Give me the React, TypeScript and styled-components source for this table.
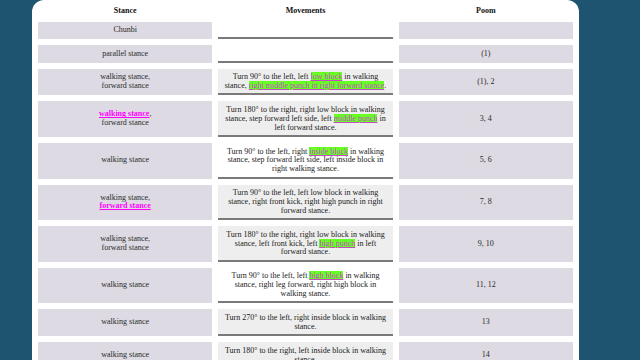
import { createGlobalStyle, styled } from "styled-components";

const GlobalStyle = createGlobalStyle`
  html, body {
    margin: 0;
    padding: 0;
    background-color: #1e5470;
    overflow: hidden;
  }
`;

const Page = styled.div`
  width: 640px;
  height: 360px;
  overflow: hidden;
`;

const Panel = styled.div`
  margin-left: 32px;
  width: 547px;
  min-height: 400px;
  background-color: white;
  border-radius: 12px 12px 0 0;
  font-family: "Liberation Serif", "Times New Roman", serif;
  font-size: 8px;
  line-height: 8.75px;
  color: #1a1a1a;
`;

const Table = styled.table`
  width: 100%;
  table-layout: fixed;
  border-spacing: 6px 6.5px;
  margin-top: 0;
`;

const Head = styled.th`
  font-weight: bold;
  padding: 0;
  line-height: 10px;
  text-align: center;
  color: #111;
`;

const Cell = styled.td`
  background-color: #dddae3;
  padding: 4.25px 4px;
  text-align: center;
  vertical-align: middle;
  color: #2a2a2a;
`;

const MoveCell = styled.td<{ $shade: boolean }>`
  background-color: ${(p) => (p.$shade ? "#eeeeee" : "#ffffff")};
  padding: 4.75px 4px 2.6px;
  text-align: center;
  vertical-align: middle;
  border-bottom: 2px solid #7a7a7a;
  color: #1a1a1a;
`;

const StanceLink = styled.a`
  color: #ff00ff;
  font-weight: bold;
  text-decoration: underline;
`;

const MoveLink = styled.a`
  color: #c848c8;
  background-color: #66ff22;
  text-decoration: underline;
`;

type Row = {
  stance: React.ReactNode;
  move: React.ReactNode;
  poom: string;
  shade: boolean;
};

const rows: Row[] = [
  { stance: "Chunbi", move: "", poom: "", shade: false },
  { stance: "parallel stance", move: "", poom: "(1)", shade: false },
  {
    stance: (
      <>
        walking stance,
        <br />
        forward stance
      </>
    ),
    move: (
      <>
        Turn 90° to the left, left <MoveLink>low block</MoveLink> in walking stance,{" "}
        <MoveLink>right middle punch in right forward stance</MoveLink>.
      </>
    ),
    poom: "(1), 2",
    shade: true,
  },
  {
    stance: (
      <>
        <StanceLink>walking stance</StanceLink>,
        <br />
        forward stance
      </>
    ),
    move: (
      <>
        Turn 180° to the right, right low block in walking stance, step forward left side, left{" "}
        <MoveLink>middle punch</MoveLink> in left forward stance.
      </>
    ),
    poom: "3, 4",
    shade: true,
  },
  {
    stance: "walking stance",
    move: (
      <>
        Turn 90° to the left, right <MoveLink>inside block</MoveLink> in walking stance, step
        forward left side, left inside block in right walking stance.
      </>
    ),
    poom: "5, 6",
    shade: false,
  },
  {
    stance: (
      <>
        walking stance,
        <br />
        <StanceLink>forward stance</StanceLink>
      </>
    ),
    move: "Turn 90° to the left, left low block in walking stance, right front kick, right high punch in right forward stance.",
    poom: "7, 8",
    shade: true,
  },
  {
    stance: (
      <>
        walking stance,
        <br />
        forward stance
      </>
    ),
    move: (
      <>
        Turn 180° to the right, right low block in walking stance, left front kick, left{" "}
        <MoveLink>high punch</MoveLink> in left forward stance.
      </>
    ),
    poom: "9, 10",
    shade: true,
  },
  {
    stance: "walking stance",
    move: (
      <>
        Turn 90° to the left, left <MoveLink>high block</MoveLink> in walking stance, right leg
        forward, right high block in walking stance.
      </>
    ),
    poom: "11, 12",
    shade: false,
  },
  {
    stance: "walking stance",
    move: "Turn 270° to the left, right inside block in walking stance.",
    poom: "13",
    shade: true,
  },
  {
    stance: "walking stance",
    move: "Turn 180° to the right, left inside block in walking stance.",
    poom: "14",
    shade: true,
  },
];

export default function App() {
  return (
    <Page>
      <GlobalStyle />
      <Panel>
        <Table>
          <thead>
            <tr>
              <Head>Stance</Head>
              <Head>Movements</Head>
              <Head>Poom</Head>
            </tr>
          </thead>
          <tbody>
            {rows.map((r, i) => (
              <tr key={i}>
                <Cell>{r.stance}</Cell>
                <MoveCell $shade={r.shade}>{r.move}</MoveCell>
                <Cell>{r.poom}</Cell>
              </tr>
            ))}
          </tbody>
        </Table>
      </Panel>
    </Page>
  );
}
